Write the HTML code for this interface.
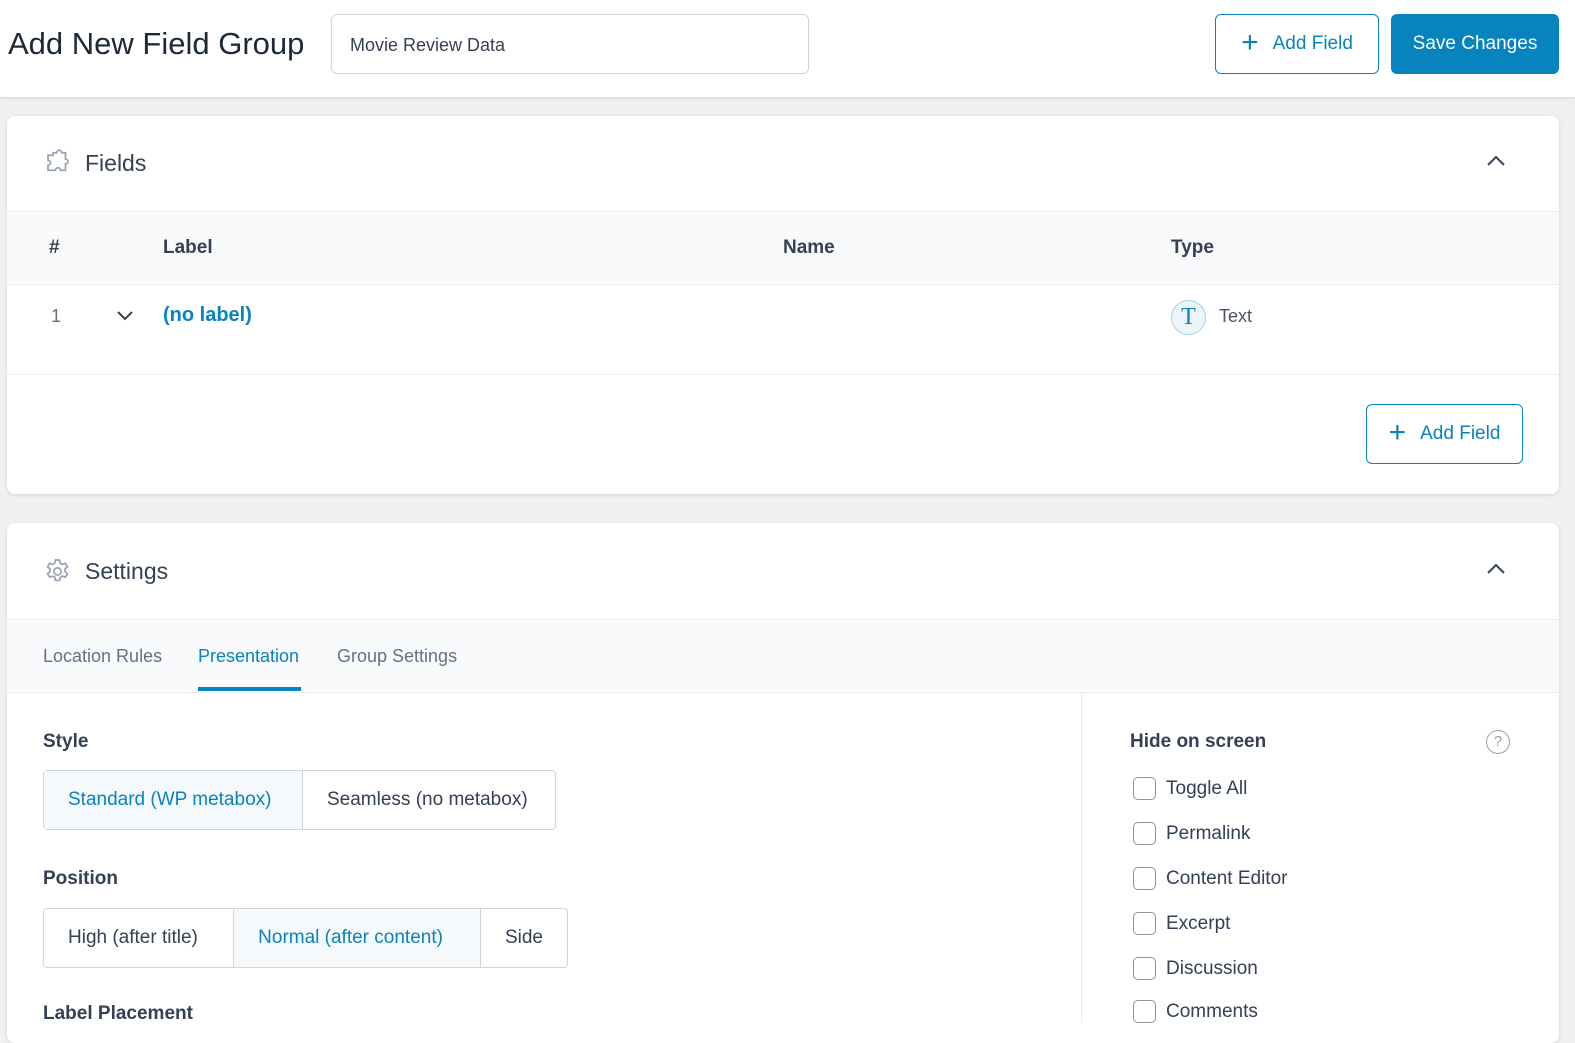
<!DOCTYPE html>
<html><head><meta charset="utf-8"><style>
*{box-sizing:border-box;margin:0;padding:0}
body{width:1575px;height:1021px;overflow:hidden;background:#f0f0f1;font-family:"Liberation Sans",sans-serif;color:#344054;position:relative}
.abs{position:absolute}
.hdr{left:0;top:0;width:1575px;height:97px;background:#fff;box-shadow:0 1px 3px rgba(0,0,0,.12)}
.panel{background:#fff;border-radius:8px;box-shadow:0 1px 3px rgba(0,0,0,.12)}
.btn{border:1px solid #0783be;border-radius:6px;color:#0783be;font-size:19px;display:flex;align-items:center;justify-content:center;gap:14px;background:#fff}
.cb{width:23px;height:23px;border:1.5px solid #8b949e;border-radius:5px;left:1133px}
.cbl{left:1166px;font-size:19px;color:#344054}
.seg{border:1px solid #d0d5dd;border-radius:4px;display:flex;height:60px;font-size:19px}
.seg div{display:flex;align-items:center;padding:0 24px;border-right:1px solid #d0d5dd}
.seg div:last-child{border-right:none}
.sel{background:#f5f9fc;color:#0783be}
</style></head><body>
<div class="abs hdr"></div>
<div class="abs" style="left:8px;top:26px;font-size:31px;color:#1d2939">Add New Field Group</div>
<div class="abs" style="left:331px;top:14px;width:478px;height:60px;border:1px solid #d0d5dd;border-radius:6px;font-size:18px;padding:20px 0 0 18px;color:#344054">Movie Review Data</div>
<div class="abs btn" style="left:1215px;top:14px;width:164px;height:60px"><span style="font-size:30px;font-weight:300;margin-top:-3px">+</span>Add Field</div>
<div class="abs" style="left:1391px;top:14px;width:168px;height:60px;background:#0783be;border-radius:6px;color:#fff;font-size:19px;display:flex;align-items:center;justify-content:center">Save Changes</div>

<div class="abs panel" style="left:7px;top:116px;width:1552px;height:378px"></div>
<svg class="abs" style="left:43px;top:149px" width="30" height="30" viewBox="0 0 24 24" fill="none" stroke="#98a2b3" stroke-width="1.4"><path d="M8 3h3a2 2 0 1 1 4 0h3v5a2 2 0 1 1 0 4v5h-4a2 2 0 1 0-4 0H4v-4a2 2 0 1 0 0-4V5h4z"/></svg>
<div class="abs" style="left:85px;top:150px;font-size:23px;color:#344054">Fields</div>
<svg class="abs" style="left:1486px;top:154px" width="20" height="14" viewBox="0 0 20 14"><path d="M2 11l8-8 8 8" fill="none" stroke="#344054" stroke-width="2"/></svg>
<div class="abs" style="left:7px;top:211px;width:1552px;height:74px;background:#f9fafb;border-top:1px solid #eaecf0;border-bottom:1px solid #eaecf0"></div>
<div class="abs" style="left:49px;top:237px;font-size:19px;font-weight:bold;color:#344054">#</div>
<div class="abs" style="left:163px;top:237px;font-size:19px;font-weight:bold;color:#344054">Label</div>
<div class="abs" style="left:783px;top:237px;font-size:19px;font-weight:bold;color:#344054">Name</div>
<div class="abs" style="left:1171px;top:237px;font-size:19px;font-weight:bold;color:#344054">Type</div>
<div class="abs" style="left:51px;top:306px;font-size:18px;color:#667085">1</div>
<svg class="abs" style="left:116px;top:310px" width="18" height="12" viewBox="0 0 18 12"><path d="M2 2l7 7 7-7" fill="none" stroke="#344054" stroke-width="2"/></svg>
<div class="abs" style="left:163px;top:304px;font-size:20px;font-weight:bold;color:#0783be">(no label)</div>
<div class="abs" style="left:1171px;top:300px;width:35px;height:35px;border-radius:50%;background:#ebf5fa;border:1px solid #a5d2e7;color:#0783be;font-family:'Liberation Serif',serif;font-size:24px;text-align:center;line-height:33px">T</div>
<div class="abs" style="left:1219px;top:306px;font-size:18px;color:#475467">Text</div>
<div class="abs" style="left:7px;top:374px;width:1552px;height:1px;background:#eaecf0"></div>
<div class="abs btn" style="left:1366px;top:404px;width:157px;height:60px"><span style="font-size:30px;font-weight:300;margin-top:-3px">+</span>Add Field</div>

<div class="abs panel" style="left:7px;top:523px;width:1552px;height:520px"></div>
<svg class="abs" style="left:43px;top:557px" width="29" height="29" viewBox="0 0 24 24" fill="none" stroke="#98a2b3" stroke-width="1.4"><circle cx="12" cy="12" r="3"/><path d="M10.3 2.5h3.4l.5 2.6 1.8 1 2.5-.9 1.7 2.9-2 1.8v2.1l2 1.8-1.7 2.9-2.5-.9-1.8 1-.5 2.6h-3.4l-.5-2.6-1.8-1-2.5.9-1.7-2.9 2-1.8V9.9l-2-1.8 1.7-2.9 2.5.9 1.8-1z"/></svg>
<div class="abs" style="left:85px;top:558px;font-size:23px;color:#344054">Settings</div>
<svg class="abs" style="left:1486px;top:562px" width="20" height="14" viewBox="0 0 20 14"><path d="M2 11l8-8 8 8" fill="none" stroke="#344054" stroke-width="2"/></svg>
<div class="abs" style="left:7px;top:619px;width:1552px;height:74px;background:#f9fafb;border-top:1px solid #eaecf0;border-bottom:1px solid #eaecf0"></div>
<div class="abs" style="left:43px;top:646px;font-size:18px;color:#667085">Location Rules</div>
<div class="abs" style="left:198px;top:646px;font-size:18px;color:#0783be">Presentation</div>
<div class="abs" style="left:198px;top:687px;width:103px;height:4px;background:#0783be"></div>
<div class="abs" style="left:337px;top:646px;font-size:18px;color:#667085">Group Settings</div>
<div class="abs" style="left:1081px;top:693px;width:1px;height:330px;background:#eaecf0"></div>

<div class="abs" style="left:43px;top:731px;font-size:19px;font-weight:bold;color:#344054">Style</div>
<div class="abs seg" style="left:43px;top:770px;width:513px"><div class="sel" style="width:259px">Standard (WP metabox)</div><div>Seamless (no metabox)</div></div>
<div class="abs" style="left:43px;top:868px;font-size:19px;font-weight:bold;color:#344054">Position</div>
<div class="abs seg" style="left:43px;top:908px;width:525px"><div style="width:191px">High (after title)</div><div class="sel" style="width:248px">Normal (after content)</div><div>Side</div></div>
<div class="abs" style="left:43px;top:1003px;font-size:19px;font-weight:bold;color:#344054">Label Placement</div>

<div class="abs" style="left:1130px;top:731px;font-size:19px;font-weight:bold;color:#344054">Hide on screen</div>
<div class="abs" style="left:1486px;top:730px;width:24px;height:24px;border:1.5px solid #98a2b3;border-radius:50%;color:#98a2b3;font-size:15px;text-align:center;line-height:21px">?</div>
<div class="abs cb" style="top:777px"></div><div class="abs cbl" style="top:778px">Toggle All</div>
<div class="abs cb" style="top:822px"></div><div class="abs cbl" style="top:823px">Permalink</div>
<div class="abs cb" style="top:867px"></div><div class="abs cbl" style="top:868px">Content Editor</div>
<div class="abs cb" style="top:912px"></div><div class="abs cbl" style="top:913px">Excerpt</div>
<div class="abs cb" style="top:957px"></div><div class="abs cbl" style="top:958px">Discussion</div>
<div class="abs cb" style="top:1000px"></div><div class="abs cbl" style="top:1001px">Comments</div>
</body></html>
